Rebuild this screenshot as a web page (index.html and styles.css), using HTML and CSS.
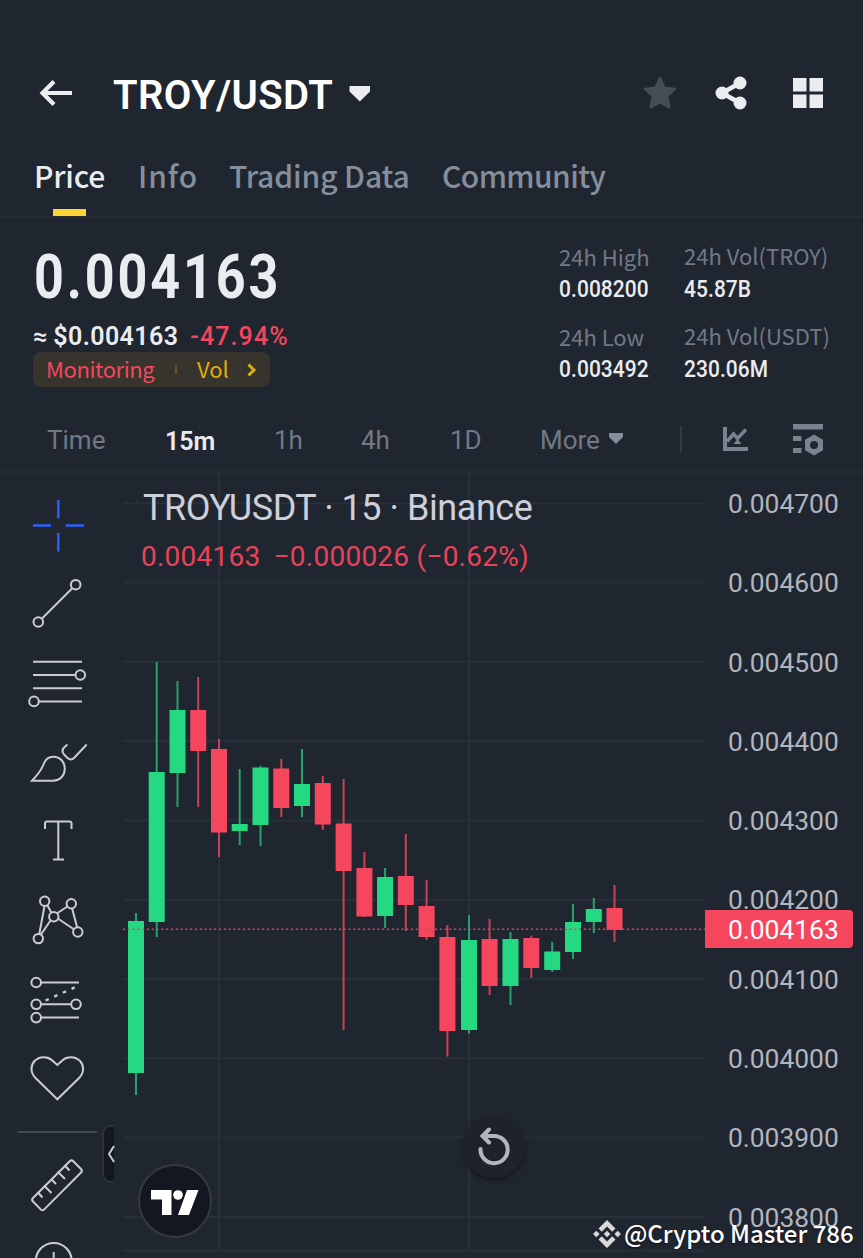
FILE: index.html
```html
<!DOCTYPE html>
<html lang="en">
<head>
    <meta charset="UTF-8">
    <meta name="viewport" content="width=device-width, initial-scale=1.0">
    <title>TROY/USDT | Price</title>
    <link rel="stylesheet" href="styles.css">
</head>
<body>
    <!-- Header -->
    <header class="header">
        <svg class="back" width="34" height="28" viewBox="0 0 34 28" fill="none" stroke="#eaecef" stroke-width="4.2">
            <path d="M33 14H4M15 2.5L3.5 14L15 25.500"/>
        </svg>
        <h1>TROY/USDT</h1>
        <svg class="caret" width="22" height="16" viewBox="0 0 22 16" fill="#eaecef"><path d="M.5 0h20.500v5.500L10.800 15.500L.5 5.500z"/></svg>
        <div class="header-icons">
            <svg width="34" height="34" viewBox="0 0 34 34" fill="#474d57" stroke="#474d57" stroke-width="2.500" stroke-linejoin="round">
                <path d="M17 2l4.400 9.700 10.600 1.200-7.800 7.200 2.200 11.400L17 26.200 7.600 31.500l2.200-11.400L2 12.900l10.600-1.200z"/>
            </svg>
            <svg width="32" height="34" viewBox="0 0 32 34" fill="#eaecef">
                <path d="M25 7L7 17l18 10" fill="none" stroke="#eaecef" stroke-width="4.600"/>
                <circle cx="25" cy="7" r="6.500"/><circle cx="7" cy="17" r="6.500"/><circle cx="25" cy="27" r="6.500"/>
            </svg>
            <svg width="30" height="30" viewBox="0 0 30 30" fill="#eaecef">
                <path d="M0 0h13.500v13.500H0zM16.500 0H30v13.500H16.500zM0 16.500h13.500V30H0zM16.500 16.500H30V30H16.500z"/>
            </svg>
        </div>
    </header>

    <!-- Tabs -->
    <nav class="tabs">
        <a class="active">Price</a>
        <a class="tab-info">Info</a>
        <a class="tab-data">Trading Data</a>
        <a class="tab-community">Community</a>
    </nav>

    <!-- Price summary -->
    <section class="summary">
        <div class="summary-main">
            <div class="price">0.004163</div>
            <div class="sub-price"><span class="approx">≈</span><span class="fiat">$0.004163</span><span class="change">-47.94%</span></div>
            <div class="tags">
                <span class="tag-monitoring">Monitoring</span>
                <i></i>
                <span class="tag-vol">Vol</span>
                <svg width="10" height="14" viewBox="0 0 10 14" fill="none" stroke="#e0ad0c" stroke-width="3"><path d="M1.500 1.500L7 7l-5.500 5.500"/></svg>
            </div>
        </div>
        <dl class="stats">
            <div><dt>24h High</dt><dd>0.008200</dd></div>
            <div class="vol"><dt>24h Vol(TROY)</dt><dd>45.87B</dd></div>
            <div><dt>24h Low</dt><dd>0.003492</dd></div>
            <div class="vol"><dt>24h Vol(USDT)</dt><dd>230.06M</dd></div>
        </dl>
    </section>

    <!-- Intervals -->
    <div class="intervals">
        <span class="i-time">Time</span>
        <span class="i-15m">15m</span>
        <span class="i-1h">1h</span>
        <span class="i-4h">4h</span>
        <span class="i-1d">1D</span>
        <span class="i-more">More</span>
        <svg class="more-caret" width="14" height="11" viewBox="0 0 14 11" fill="#848e9c"><path d="M0 0h14v4L7 11L0 4z"/></svg>
        <i></i>
        <svg class="draw-icon" width="25" height="25" viewBox="0 0 25 25" fill="none" stroke="#7b828e" stroke-width="4">
            <path d="M2 0v22h23"/>
            <path d="M4 14.500L10.500 7l4 4.500L23 2.500" stroke-width="3.500"/>
            <path d="M10.500 17l4-5 4 5z" fill="#7b828e" stroke="none"/>
        </svg>
        <svg width="31" height="32" viewBox="0 0 31 32" fill="#7b828e">
            <path d="M0 0h30v5.500H0zM0 12h8.500v5H0zM0 24h8.500v5H0z"/>
            <path fill-rule="evenodd" d="M21 10.500l9 5.200v10.600l-9 5.200-9-5.200V15.700zM21 17a4 4 0 1 0 0 8 4 4 0 0 0 0-8z"/>
        </svg>
    </div>

    <!-- Chart -->
    <main class="chart">
        <aside class="tools">
            <svg width="122" height="785" viewBox="0 473 122 785" fill="none" stroke="#c9ccd6" stroke-width="2">
                <path d="M58.300 500v18.500M58.300 533v18.500M33 525.500h18M65.500 525.500h18.500" stroke="#2962ff" stroke-width="2.400"/>

                <path d="M42 618.500L72 588.500"/>
                <circle cx="38.300" cy="622" r="4.800"/><circle cx="75.700" cy="584.700" r="4.800"/>

                <path d="M33 661.700h49M33 675h42M33 688.300h49M39 701.400h43"/>
                <circle cx="80.300" cy="675" r="4.800"/><circle cx="34" cy="701.400" r="4.800"/>

                <path d="M32 780.700H53C60.500 780.700 64.800 775 64.800 768.500C64.800 762 60 756.800 53.500 756.800C48.500 756.800 45 760 43.500 764.500C41.500 769.500 37.500 775 32 780.700z"/>
                <path d="M67.500 744.500l-3 2.500c-2.500 2.500-2.500 5.500 0 8l3 3c2 1.700 4.600 1.700 6.500 0L86.700 744.500"/>

                <path d="M45 829v-5.500a2 2 0 0 1 2-2h22.500a2 2 0 0 1 2 2v5.500M58.300 822v37.500M53 859.500h11"/>

                <path d="M44.500 906L39.300 934M47.500 905.500l4 7.500M57.500 913l10-6.500M72 908l5 19M58.500 919l15 10M50.500 920.500L41 934.500"/>
                <circle cx="44.700" cy="901.300" r="4.700"/><circle cx="71.300" cy="903.700" r="4.700"/><circle cx="53.800" cy="916.700" r="4.700"/>
                <circle cx="77.800" cy="932" r="4.700"/><circle cx="38.300" cy="938.600" r="4.700"/>

                <path d="M41 982.500h38M41 1004.300h30M41 1017.600h38"/>
                <path d="M45.500 1000.500L78 986" stroke-dasharray="3.500 6" stroke-width="2.400"/>
                <circle cx="36.200" cy="982.500" r="4.800"/><circle cx="36.200" cy="1004.300" r="4.800"/><circle cx="76" cy="1004.300" r="4.800"/><circle cx="36.200" cy="1017.600" r="4.800"/>

                <path d="M57.300 1099.300L36 1078.500c-6-6-5.500-13-1.500-17.500 5-5 13-5 17.500-.8l5.300 4.800 5.300-4.800c4.500-4.200 12.500-4.200 17.500.8 4 4.500 4.500 11.500-1.500 17.500z"/>

                <path d="M17.500 1132H97" stroke="#434a56"/>

                <rect x="-8" y="-28.500" width="16" height="57" rx="2.500" transform="translate(57 1185.300) rotate(45)"/>
                <path d="M37.500 1192l5 5.500M44 1185.500l7.500 7.500M51 1179l5 5M57.500 1171.500l7.500 7.500M64.500 1165l5 5.500"/>

                <circle cx="53.700" cy="1261" r="18"/><path d="M53.700 1252v18"/>

                <path d="M114 1126h-3a8 8 0 0 0-8 8v40a8 8 0 0 0 8 8h3z" fill="#131722" stroke="none"/>
                <path d="M114 1126h-3a8 8 0 0 0-8 8v40a8 8 0 0 0 8 8h3" stroke="#2b313c"/>
                <path d="M114 1146l-5 8 5 8"/>
            </svg>
        </aside>
        <div class="plot">
            <svg id="candles" width="583" height="785" viewBox="122 473 583 785"></svg>
            <div class="legend">
                <div class="legend-title">TROYUSDT · 15 · Binance</div>
                <div class="legend-values"><span>0.004163</span><span class="legend-diff">−0.000026 (−0.62%)</span></div>
            </div>
            <div class="tv-logo">
                <svg width="48" height="25" viewBox="0 0 48 25" fill="#fff">
                    <path d="M0 0h20.500v25H11V9.500H0zM36 0h11.500L38 25H27z"/><circle cx="27" cy="5" r="4.800"/>
                </svg>
            </div>
            <div class="reset">
                <svg width="34" height="40" viewBox="0 0 34 40" fill="none" stroke="#b2b5be" stroke-width="4" stroke-linecap="round">
                    <path d="M3.500 22A13.600 13.600 0 1 0 17 9H6M12 2.500L5.500 9 12 15.500"/>
                </svg>
            </div>
        </div>
        <div class="axis">
            <div id="priceScale"></div>
            <div class="last-price">0.004163</div>
        </div>
    </main>

    <div class="watermark">
        <svg width="28" height="28" viewBox="0 0 28 28" fill="#d9d9d9">
            <path d="M14 0l8.500 8.500-3.300 3.300L14 6.600l-5.200 5.200-3.300-3.300zM14 28l8.500-8.500-3.300-3.300L14 21.400l-5.200-5.200-3.300 3.300zM3.300 10.700L6.600 14l-3.300 3.300L0 14zM24.700 10.700L28 14l-3.300 3.300-3.300-3.300zM14 10.700l3.300 3.300-3.300 3.300-3.300-3.300z"/>
        </svg>
        <span>@Crypto Master 786</span>
    </div>

    <script>
        // x, high, body top, body bottom, low, direction
        const candles = [
            [136, 913, 921, 1073, 1095, 'up'],
            [156.7, 662, 772, 922, 937, 'up'],
            [177.5, 681, 710, 773, 807, 'up'],
            [198.2, 677, 710, 751, 807, 'down'],
            [219, 739, 749, 832.5, 857, 'down'],
            [239.7, 769, 824, 831, 845, 'up'],
            [260.5, 766, 767.5, 825, 846, 'up'],
            [281.3, 759, 768.5, 808, 817, 'down'],
            [302, 749, 784, 806, 817, 'up'],
            [322.8, 776, 783, 824.5, 830, 'down'],
            [343.6, 779, 823.5, 871, 1030, 'down'],
            [364.4, 852, 868, 916.5, 917, 'down'],
            [385.1, 868, 877, 916, 928, 'up'],
            [405.8, 834, 876, 905, 931, 'down'],
            [426.6, 880, 906, 937, 940, 'down'],
            [447.4, 925, 937, 1031, 1056.5, 'down'],
            [469, 915, 940, 1030, 1033.5, 'up'],
            [489.6, 919, 939, 986, 995, 'down'],
            [510.5, 932, 939, 986, 1005, 'up'],
            [531.3, 935.5, 938, 968, 978, 'down'],
            [552.2, 942, 951.5, 970, 972, 'up'],
            [573, 904, 922, 952, 959, 'up'],
            [593.8, 898, 909, 922, 933, 'up'],
            [614.5, 885, 908, 930, 942, 'down']
        ];
        const step = 79.3;
        const top0 = 503.2;

        let svg = '';
        for (let i = 0; i < 10; i++) {
            const y = top0 + i * step;
            svg += `<path class="grid-line" d="M123 ${y}H705"/>`;
        }
        svg += '<path class="grid-line" d="M219 473V1250M469 473V1250M123 1250.500H705"/>';
        candles.forEach(([x, high, top, bottom, low, dir]) => {
            svg += `<path class="wick ${dir}" d="M${x} ${high}V${low}"/>`;
            svg += `<rect class="${dir}" x="${x - 8}" y="${top}" width="16" height="${bottom - top}"/>`;
        });
        svg += '<path class="last-line" d="M123 929.300H705"/>';
        document.getElementById('candles').innerHTML = svg;

        // Price labels
        let labels = '';
        for (let i = 0; i < 10; i++) {
            labels += `<div class="axis-label">${(0.0047 - i * 0.0001).toFixed(6)}</div>`;
        }
        document.getElementById('priceScale').innerHTML = labels;
    </script>
</body>
</html>
```
FILE: styles.css
```css
:root {
    --bg: #202630;
    --line: #272d37;
    --text: #eaecef;
    --muted: #848e9c;
    --dim: #717985;
    --green: #25d983;
    --red: #f6465d;
    --yellow: #fcd535;
    --sans: 'Noto Sans CJK SC', sans-serif;
    --num: Roboto, sans-serif;
}

* {
    margin: 0;
    padding: 0;
    box-sizing: border-box;
}

body {
    position: relative;
    width: 863px;
    height: 1258px;
    overflow: hidden;
    background: var(--bg);
    color: var(--text);
    font-family: var(--num);
}

svg {
    display: block;
    flex: none;
}

span, a, dt, dd {
    white-space: nowrap;
}

/* Header */
.header {
    display: flex;
    align-items: center;
    height: 138px;
    padding: 48px 40px 0 39px;
}

.header h1 {
    width: 220px;
    margin-left: 40px;
    padding-top: 4px;
    font-size: 40px;
    font-weight: 600;
    letter-spacing: .4px;
    color: #fff;
    white-space: nowrap;
}

.caret {
    margin: 2px 0 0 16px;
}

.header-icons {
    display: flex;
    align-items: center;
    margin-left: auto;
}

.header-icons svg:nth-child(2) {
    margin-left: 38px;
}

.header-icons svg:nth-child(3) {
    margin-left: 46px;
}

/* Tabs */
.tabs {
    display: flex;
    height: 80px;
    padding-left: 34px;
    border-bottom: 2px solid var(--line);
    font-family: var(--sans);
    font-size: 30px;
    font-weight: 500;
    line-height: 75px;
    color: var(--muted);
}

.tabs a {
    position: relative;
}

.tabs .active {
    width: 71px;
    letter-spacing: -.2px;
    color: var(--text);
}

.tabs .active::after {
    content: '';
    position: absolute;
    left: 19px;
    bottom: 0;
    width: 33px;
    height: 7px;
    background: var(--yellow);
}

.tab-info {
    width: 58px;
    margin-left: 33px;
    letter-spacing: .9px;
}

.tab-data {
    width: 180px;
    margin-left: 33px;
    letter-spacing: -.1px;
}

.tab-community {
    margin-left: 33px;
    letter-spacing: -.6px;
}

/* Summary */
.summary {
    display: flex;
    justify-content: space-between;
    height: 189px;
    padding: 23px 32px 0 33px;
}

.price {
    width: 240px;
    height: 72px;
    margin-left: 1px;
    font-size: 62px;
    font-weight: 700;
    letter-spacing: 3.400px;
    line-height: 72px;
    transform: scaleX(.84);
    transform-origin: left;
}

.sub-price {
    display: flex;
    height: 38px;
    margin-top: 1px;
    font-size: 25px;
    font-weight: 600;
    line-height: 46px;
}

.fiat {
    width: 124px;
    margin-left: 6px;
    letter-spacing: .4px;
}

.change {
    margin-left: 13px;
    font-weight: 500;
    letter-spacing: 1.1px;
    color: var(--red);
}

.tags {
    display: flex;
    align-items: center;
    width: 237px;
    height: 35px;
    padding-left: 13px;
    border-radius: 8px;
    background: #37342d;
    font-family: var(--sans);
    font-size: 22px;
    line-height: 32px;
}

.tag-monitoring {
    width: 109px;
    padding-bottom: 4px;
    letter-spacing: -.4px;
    color: var(--red);
}

.tags i {
    width: 2px;
    height: 9px;
    margin-left: 20px;
    background: #665522;
}

.tag-vol {
    width: 32px;
    margin-left: 20px;
    padding-bottom: 4px;
    color: #e0ad0c;
}

.tags svg {
    margin-left: 18px;
}

.stats {
    display: grid;
    grid-template-columns: 125px 147px;
    grid-auto-rows: 80px;
}

.stats dt {
    font-family: var(--sans);
    font-size: 22px;
    line-height: 30px;
    color: var(--dim);
}

.stats dd {
    padding-top: 3px;
    font-size: 23px;
    font-weight: 500;
    letter-spacing: .1px;
    line-height: 32px;
    transform: scaleX(.91);
    transform-origin: left;
}

.stats .vol {
    margin-top: -1px;
}

.vol dd {
    padding-top: 4px;
}

/* Intervals */
.intervals {
    display: flex;
    align-items: center;
    height: 66px;
    padding-left: 47px;
    border-bottom: 2px solid var(--line);
    font-size: 26px;
    color: var(--dim);
}

.intervals span {
    padding-top: 2px;
}

.intervals .i-time {
    width: 118px;
}

.intervals .i-15m {
    width: 109px;
    padding-top: 4px;
    font-size: 25px;
    font-weight: 600;
    color: var(--text);
}

.i-1h {
    width: 87px;
}

.i-4h {
    width: 89px;
}

.i-1d {
    width: 90px;
}

.i-more {
    width: 69px;
}

.more-caret {
    margin-bottom: 2px;
}

.intervals i {
    width: 2px;
    height: 26px;
    margin-left: 57px;
    background: #343a45;
}

.draw-icon {
    margin: 0 45px 0 41px;
}

.intervals svg:last-child {
    margin-top: 2px;
}

/* Chart */
.chart {
    display: grid;
    grid-template-columns: 122px 583px 158px;
    height: 785px;
}

.plot, .axis {
    position: relative;
}

.grid-line {
    stroke: #292f39;
    stroke-width: 2;
}

.wick {
    stroke-width: 2;
}

.wick.up {
    stroke: #25a36c;
}

.wick.down {
    stroke: #cd4055;
}

rect.up {
    fill: var(--green);
}

rect.down {
    fill: var(--red);
}

.last-line {
    stroke: #d9465b;
    stroke-width: 1.500;
    stroke-dasharray: 2 2.800;
}

.legend {
    position: absolute;
    top: 12px;
    left: 20px;
    white-space: nowrap;
}

.legend-title {
    padding-left: 1px;
    font-size: 36px;
    letter-spacing: -.45px;
    line-height: 47px;
    color: #cdd0d9;
}

.legend-values {
    margin-left: -1px;
    font-size: 28px;
    letter-spacing: .25px;
    line-height: 49px;
    color: #e8435a;
}

.legend-diff {
    margin-left: 13px;
}

.tv-logo {
    position: absolute;
    left: 16px;
    top: 691px;
    display: grid;
    place-items: center;
    width: 74px;
    height: 74px;
    padding-top: 2px;
    border: 2px solid #343943;
    border-radius: 50%;
    background: #131722;
}

.reset {
    position: absolute;
    left: 341px;
    top: 643px;
    display: grid;
    place-items: center;
    width: 62px;
    height: 62px;
    border-radius: 50%;
    background: #1e222d;
    box-shadow: 0 3px 4px rgba(0, 0, 0, .35);
}

.axis-label {
    height: 79.300px;
    padding-left: 23px;
    font-size: 26.400px;
    line-height: 62px;
    color: #b2b5be;
}

.last-price {
    position: absolute;
    left: 0;
    top: 437px;
    width: 148px;
    height: 38px;
    padding-left: 23px;
    border-radius: 0 4px 4px 0;
    background: var(--red);
    color: #fff;
    font-size: 26.400px;
    line-height: 40px;
}

/* Watermark */
.watermark {
    position: absolute;
    left: 593px;
    top: 1215px;
    display: flex;
    align-items: center;
    height: 34px;
    font-family: var(--sans);
    font-size: 24px;
    font-weight: 500;
    letter-spacing: 0;
    color: #fff;
    text-shadow: 0 1px 2px rgba(0, 0, 0, .6);
}

.watermark svg {
    margin-top: 4px;
}

.watermark span {
    margin-left: 3px;
}
```
